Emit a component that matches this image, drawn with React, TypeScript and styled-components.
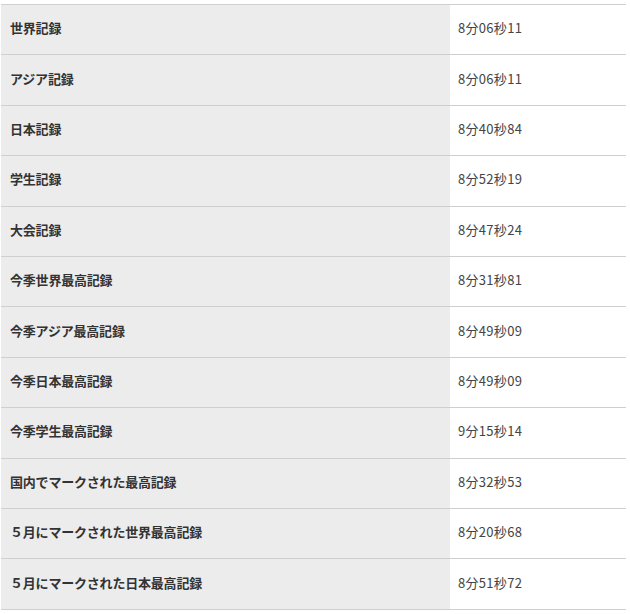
import React from "react";
import styled, { createGlobalStyle } from "styled-components";

const Global = createGlobalStyle`
  html, body { margin: 0; padding: 0; background: #fff; }
  body { font-family: "Noto Sans CJK JP", "Noto Sans", sans-serif; color: #333; }
`;

const Page = styled.div`
  padding: 4px 0 0 1px;
`;

const Table = styled.div`
  width: 625px;
  border-top: 1px solid #cfcfcf;
  display: flex;
  flex-direction: column;
`;

const Row = styled.div`
  display: grid;
  grid-template-columns: 449px 1fr;
  height: 50.42px;
  box-sizing: border-box;
  border-bottom: 1px solid #cfcfcf;
`;

const Head = styled.div`
  background: #ececec;
  display: flex;
  align-items: center;
  padding-left: 9px;
  padding-bottom: 3px;
  font-size: 13px;
  line-height: 18px;
  font-weight: 700;
  color: #333;
  letter-spacing: -0.2px;
`;

const Value = styled.div`
  background: #fff;
  display: flex;
  align-items: center;
  padding-left: 8px;
  padding-bottom: 3px;
  font-size: 13px;
  line-height: 18px;
  font-weight: 400;
  color: #444;
  letter-spacing: 0.3px;
`;

const rows: [string, string][] = [
  ["世界記録", "8分06秒11"],
  ["アジア記録", "8分06秒11"],
  ["日本記録", "8分40秒84"],
  ["学生記録", "8分52秒19"],
  ["大会記録", "8分47秒24"],
  ["今季世界最高記録", "8分31秒81"],
  ["今季アジア最高記録", "8分49秒09"],
  ["今季日本最高記録", "8分49秒09"],
  ["今季学生最高記録", "9分15秒14"],
  ["国内でマークされた最高記録", "8分32秒53"],
  ["５月にマークされた世界最高記録", "8分20秒68"],
  ["５月にマークされた日本最高記録", "8分51秒72"],
];

export default function App() {
  return (
    <Page>
      <Global />
      <Table>
        {rows.map(([h, v]) => (
          <Row key={h}>
            <Head>{h}</Head>
            <Value>{v}</Value>
          </Row>
        ))}
      </Table>
    </Page>
  );
}
